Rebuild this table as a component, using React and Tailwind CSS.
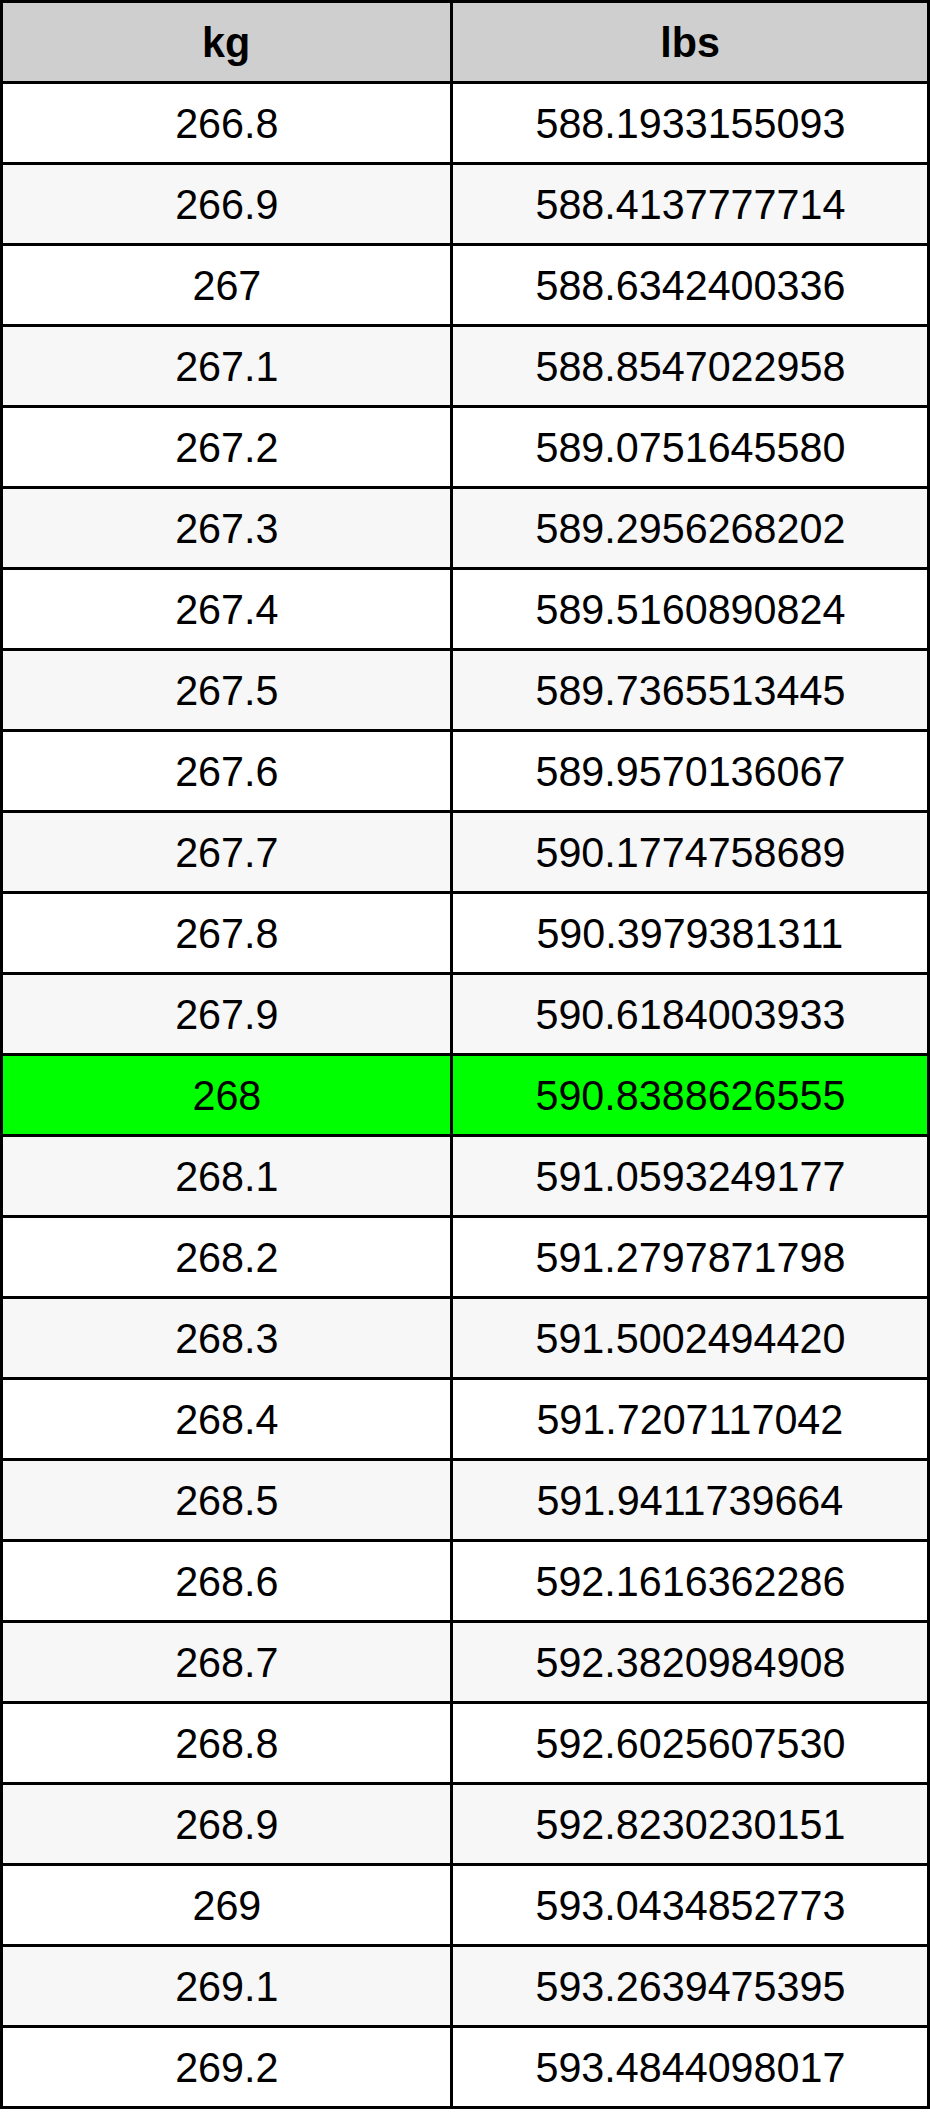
import React from "react";

const rows = [
  ["266.8", "588.1933155093"],
  ["266.9", "588.4137777714"],
  ["267", "588.6342400336"],
  ["267.1", "588.8547022958"],
  ["267.2", "589.0751645580"],
  ["267.3", "589.2956268202"],
  ["267.4", "589.5160890824"],
  ["267.5", "589.7365513445"],
  ["267.6", "589.9570136067"],
  ["267.7", "590.1774758689"],
  ["267.8", "590.3979381311"],
  ["267.9", "590.6184003933"],
  ["268", "590.8388626555"],
  ["268.1", "591.0593249177"],
  ["268.2", "591.2797871798"],
  ["268.3", "591.5002494420"],
  ["268.4", "591.7207117042"],
  ["268.5", "591.9411739664"],
  ["268.6", "592.1616362286"],
  ["268.7", "592.3820984908"],
  ["268.8", "592.6025607530"],
  ["268.9", "592.8230230151"],
  ["269", "593.0434852773"],
  ["269.1", "593.2639475395"],
  ["269.2", "593.4844098017"],
];

function Cell({ bg, children }) {
  return (
    <div className={`flex items-center justify-center ${bg}`}>
      <span className="inline-block scale-x-[0.96]">{children}</span>
    </div>
  );
}

export default function App() {
  return (
    <div className="w-[930px] bg-white font-['Liberation_Sans',Arial,sans-serif] text-black">
      <div className="flex flex-col gap-[3px] bg-black p-[3px]">
        <div className="grid h-[78px] grid-cols-[447px_474px] gap-[3px] text-[43px] font-bold leading-none">
          <Cell bg="bg-[#cfcfcf]">kg</Cell>
          <Cell bg="bg-[#cfcfcf]">lbs</Cell>
        </div>
        {rows.map(([kg, lbs], i) => {
          const bg =
            kg === "268"
              ? "bg-[#00ff00]"
              : i % 2 === 1
              ? "bg-[#f7f7f7]"
              : "bg-white";
          return (
            <div
              key={kg}
              className="grid h-[78px] grid-cols-[447px_474px] gap-[3px] text-[43px] leading-none"
            >
              <Cell bg={bg}>{kg}</Cell>
              <Cell bg={bg}>{lbs}</Cell>
            </div>
          );
        })}
      </div>
    </div>
  );
}
